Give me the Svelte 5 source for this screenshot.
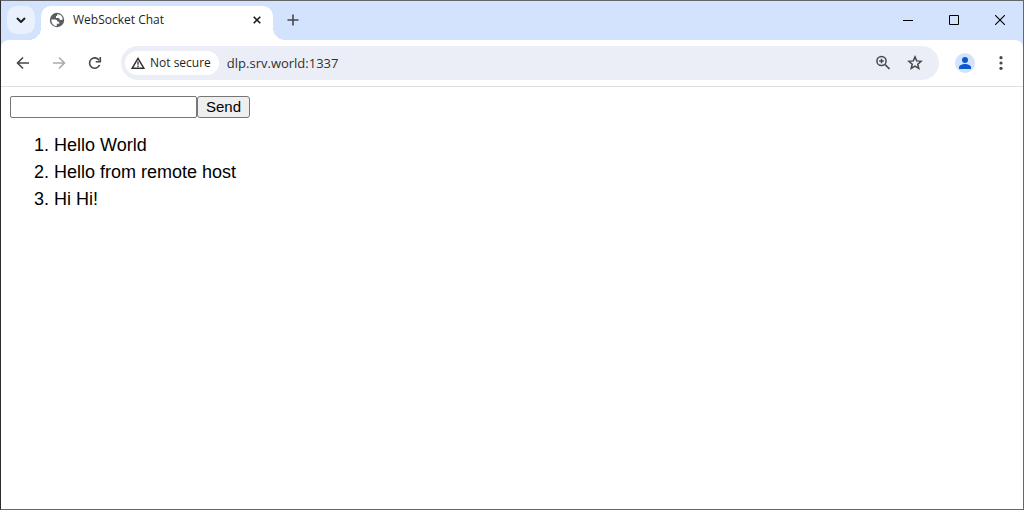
<script>
  let messages = $state(['Hello World', 'Hello from remote host', 'Hi Hi!']);
  let draft = $state('');
  let address = $state('dlp.srv.world:1337');

  function send(event) {
    event.preventDefault();
    if (draft) messages.push(draft);
    draft = '';
  }
</script>

<div class="window">
  <header class="tabstrip">
    <button class="tab-search" aria-label="Search tabs">
      <svg width="10" height="6" viewBox="0 0 10 6"><path d="M1 1l4 4 4-4" fill="none" stroke="#1f1f1f" stroke-width="2" /></svg>
    </button>
    <div class="tab">
      <svg class="globe" width="16" height="16" viewBox="0 0 16 16">
        <circle cx="8" cy="8" r="7.2" fill="#5a5e63" />
        <path d="M2.300 7.500h3.700c1.800 0 2.600 1 2.600 2.300h1.600v2H7.800v2.300c-3.200.1-5.500-2.600-5.500-6.600z" fill="#fff" />
        <path d="M8.300 1.900c3 .1 5.300 2.400 5.500 5.300-.8 1-2.200 1.100-3.100.2-.4-.4-.5-1-.5-1.500H7V4.100c1.100 0 1.600-.8 1.300-2.200z" fill="#fff" />
      </svg>
      <span class="title">WebSocket Chat</span>
      <button class="tab-close" aria-label="Close tab">
        <svg width="8" height="8" viewBox="0 0 8 8"><path d="M.7.7l6.600 6.600M7.300.7L.7 7.300" fill="none" stroke="#1f1f1f" stroke-width="1.600" /></svg>
      </button>
    </div>
    <button class="new-tab" aria-label="New tab">
      <svg width="12" height="12" viewBox="0 0 12 12"><path d="M6 .5v11M.5 6h11" fill="none" stroke="#474747" stroke-width="1.600" /></svg>
    </button>
    <div class="window-controls">
      <button aria-label="Minimize">
        <svg width="10" height="10" viewBox="0 0 10 10"><path d="M0 5.500h10" stroke="#000" /></svg>
      </button>
      <button aria-label="Maximize">
        <svg width="10" height="10" viewBox="0 0 10 10"><path d="M.5.5h9v9h-9z" fill="none" stroke="#000" /></svg>
      </button>
      <button aria-label="Close">
        <svg width="10" height="10" viewBox="0 0 10 10"><path d="M0 0l10 10M10 0L0 10" stroke="#000" stroke-width="1.100" /></svg>
      </button>
    </div>
  </header>

  <nav class="toolbar">
    <div class="history">
      <button aria-label="Back">
        <svg width="14" height="14" viewBox="0 0 14 14"><path d="M13 7H2M7 1.500L1.500 7 7 12.500" fill="none" stroke="#474747" stroke-width="1.600" /></svg>
      </button>
      <button aria-label="Forward">
        <svg width="14" height="14" viewBox="0 0 14 14"><path d="M1 7h11M7 1.500L12.500 7 7 12.500" fill="none" stroke="#ababab" stroke-width="1.600" /></svg>
      </button>
      <button aria-label="Reload">
        <svg width="14" height="14" viewBox="0 0 14 14">
          <path d="M11.600 9A5.200 5.200 0 1 1 11.200 4.300" fill="none" stroke="#474747" stroke-width="1.600" />
          <path d="M12.300 1v4.800H7.700" fill="none" stroke="#474747" stroke-width="1.600" />
        </svg>
      </button>
    </div>
    <div class="omnibox">
      <button class="security">
        <svg width="14" height="12" viewBox="0 0 14 12">
          <path d="M7 1.300L12.900 11.300H1.100z" fill="none" stroke="#303030" stroke-width="1.400" />
          <path d="M7 4.500v3.200M7 8.500v1.400" stroke="#303030" stroke-width="1.300" />
        </svg>
        <span>Not secure</span>
      </button>
      <input class="address" aria-label="Address" bind:value={address} />
      <button class="action" aria-label="Zoom">
        <svg width="16" height="16" viewBox="0 0 16 16">
          <circle cx="6.500" cy="6" r="4.600" fill="none" stroke="#474747" stroke-width="1.500" />
          <path d="M10 9.500l4.500 4.500" stroke="#474747" stroke-width="1.700" />
          <path d="M6.500 3.700v4.600M4.200 6h4.600" stroke="#474747" stroke-width="1.400" />
        </svg>
      </button>
      <button class="action" aria-label="Bookmark this tab">
        <svg width="16" height="16" viewBox="0 0 16 16"><path d="M8 1.900l1.700 4 4.400.4-3.300 2.900 1 4.300L8 11.200l-3.800 2.300 1-4.300-3.300-2.900 4.400-.4z" fill="none" stroke="#474747" stroke-width="1.500" /></svg>
      </button>
    </div>
    <button class="profile" aria-label="Profile">
      <svg width="20" height="20" viewBox="0 0 20 20">
        <circle cx="10" cy="10" r="10" fill="#d3e3fd" />
        <circle cx="10" cy="7" r="3" fill="#0b57d0" />
        <path d="M4 16v-1.700c0-2 3.500-3.300 6-3.300s6 1.300 6 3.300V16z" fill="#0b57d0" />
      </svg>
    </button>
    <button class="menu" aria-label="Menu">
      <svg width="4" height="14" viewBox="0 0 4 14" fill="#474747"><circle cx="2" cy="1.700" r="1.600" /><circle cx="2" cy="7" r="1.600" /><circle cx="2" cy="12.300" r="1.600" /></svg>
    </button>
  </nav>

  <main>
    <form onsubmit={send}>
      <input aria-label="Message" autocomplete="off" bind:value={draft} />
      <button>Send</button>
    </form>
    <ol>
      {#each messages as message}
        <li>{message}</li>
      {/each}
    </ol>
  </main>
</div>

<style>
  :global(body) {
    margin: 0;
  }

  .window {
    box-sizing: border-box;
    display: flex;
    flex-direction: column;
    min-height: 100vh;
    border: 1px solid #66676b;
    border-left-color: #2b2b2e;
    background: #d3e3fd;
    font-family: "Open Sans", "Noto Sans", sans-serif;
    color: #1f1f1f;
  }

  .window button,
  .address {
    margin: 0;
    padding: 0;
    border: 0;
    background: none;
    color: inherit;
    font-family: inherit;
  }

  .window svg {
    display: block;
    flex: none;
  }

  .tabstrip {
    display: flex;
    padding: 5px 0 0 6px;
  }

  .window .tab-search {
    display: grid;
    place-items: center;
    width: 28px;
    height: 28px;
    border-radius: 10px;
    background: #e9f1fe;
  }

  .tab {
    position: relative;
    display: flex;
    align-items: center;
    box-sizing: border-box;
    width: 232px;
    height: 34px;
    margin-left: 6px;
    padding: 0 12px 6px 8px;
    border-radius: 10px 10px 0 0;
    background: #fff;
  }

  /* Concave feet that join the tab to the toolbar. */
  .tab::before,
  .tab::after {
    content: "";
    position: absolute;
    bottom: 0;
    width: 12px;
    height: 12px;
  }

  .tab::before {
    right: 100%;
    background: radial-gradient(circle at 0 0, transparent 12px, #fff 12px);
  }

  .tab::after {
    left: 100%;
    background: radial-gradient(circle at 100% 0, transparent 12px, #fff 12px);
  }

  .title {
    flex: 1;
    margin-left: 8px;
    font-size: 12px;
    line-height: 16px;
    white-space: nowrap;
  }

  .window .tab-close {
    display: grid;
    place-items: center;
    width: 8px;
    height: 16px;
  }

  .window .new-tab {
    display: grid;
    place-items: center;
    width: 28px;
    height: 28px;
    margin-left: 6px;
  }

  .window-controls {
    display: flex;
    margin-left: auto;
  }

  .window .window-controls button {
    display: grid;
    place-items: center;
    width: 46px;
    height: 28px;
  }

  .toolbar {
    display: flex;
    align-items: center;
    box-sizing: border-box;
    height: 47px;
    padding: 0 12px 0 4px;
    border-bottom: 1px solid #dedfe1;
    border-radius: 8px 8px 0 0;
    background: #fff;
  }

  .history {
    display: flex;
  }

  .window .history button {
    display: grid;
    place-items: center;
    width: 36px;
    height: 34px;
  }

  .omnibox {
    display: flex;
    flex: 1;
    align-items: center;
    box-sizing: border-box;
    height: 34px;
    margin: 0 16px 0 8px;
    padding: 0 8px 0 4px;
    border-radius: 17px;
    background: #ebeef7;
  }

  .window .security {
    display: flex;
    align-items: center;
    gap: 5px;
    height: 24px;
    padding: 0 8px 0 6px;
    border-radius: 12px;
    background: #fff;
    font-size: 12px;
    font-weight: 500;
    line-height: 16px;
    white-space: nowrap;
  }

  .window .address {
    flex: 1;
    min-width: 0;
    margin-left: 8px;
    color: #303134;
    font-size: 13px;
    line-height: 20px;
    outline: none;
  }

  .window .action {
    display: grid;
    place-items: center;
    width: 32px;
    height: 34px;
  }

  .window .menu {
    display: grid;
    place-items: center;
    width: 20px;
    height: 34px;
    margin-left: 16px;
  }

  main {
    flex: 1;
    padding: 9px;
    background: #fff;
    color: #000;
    font-family: "Liberation Sans", Arial, sans-serif;
  }

  form {
    display: flex;
  }

  form input {
    box-sizing: border-box;
    width: 187px;
    height: 22px;
    padding: 1px 2px;
    border: 1px solid #767676;
    border-radius: 2px;
    font: 15px "Liberation Sans", Arial, sans-serif;
  }

  .window form button {
    height: 22px;
    padding: 0 8px;
    border: 1px solid #767676;
    border-radius: 3px;
    background: #efefef;
    font-size: 15px;
    line-height: 20px;
  }

  ol {
    margin: 14px 0 0;
    padding-left: 44px;
    font-size: 18px;
    line-height: 27px;
  }
</style>
